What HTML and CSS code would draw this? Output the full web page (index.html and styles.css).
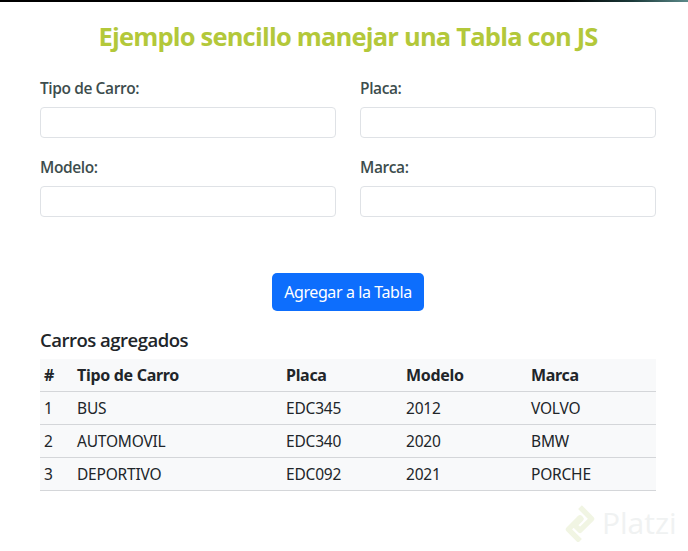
FILE: index.html
```html
<!DOCTYPE html>
<html lang="es">
<head>
<meta charset="utf-8">
<title>Tabla con JS</title>
<link rel="stylesheet" href="styles.css">
</head>
<body>
<div class="topline"></div>
<main class="container">
  <h1 class="title">Ejemplo sencillo manejar una Tabla con JS</h1>
  <form class="form">
    <div class="field">
      <label class="label">Tipo de Carro:</label>
      <input class="input" type="text">
    </div>
    <div class="field">
      <label class="label">Placa:</label>
      <input class="input" type="text">
    </div>
    <div class="field">
      <label class="label">Modelo:</label>
      <input class="input" type="text">
    </div>
    <div class="field">
      <label class="label">Marca:</label>
      <input class="input" type="text">
    </div>
  </form>
  <div class="actions">
    <button class="btn" type="button">Agregar a la Tabla</button>
  </div>
  <h2 class="subtitle">Carros agregados</h2>
  <table class="table">
    <thead>
      <tr><th class="c-num">#</th><th class="c-tipo">Tipo de Carro</th><th class="c-placa">Placa</th><th class="c-modelo">Modelo</th><th>Marca</th></tr>
    </thead>
    <tbody>
      <tr><td>1</td><td>BUS</td><td>EDC345</td><td>2012</td><td>VOLVO</td></tr>
      <tr><td>2</td><td>AUTOMOVIL</td><td>EDC340</td><td>2020</td><td>BMW</td></tr>
      <tr><td>3</td><td>DEPORTIVO</td><td>EDC092</td><td>2021</td><td>PORCHE</td></tr>
    </tbody>
  </table>
</main>
<div class="watermark">
  <svg class="wm-logo" width="32" height="38" viewBox="0 0 30 36"><path d="M15 3 L26 14 L15 25 L10 20 L16 14 L15 13 L4 24 L15 35" fill="none" stroke="#f1f5e3" stroke-width="5" stroke-linejoin="round"/></svg>
  <span class="wm-text">Platzi</span>
</div>
</body>
</html>
```
FILE: styles.css
```css
html, body {
  margin: 0;
  padding: 0;
  background: #ffffff;
}
body {
  font-family: "Noto Sans", "Open Sans", sans-serif;
  color: #212529;
  width: 688px;
  height: 551px;
  overflow: hidden;
  position: relative;
}
.topline {
  height: 2px;
  background: linear-gradient(90deg, #000 0%, #000 82%, #1b3a3a 92%, #5c8a8a 100%);
}
.container {
  width: 616px;
  margin-left: 40px;
}
.title {
  margin: 0;
  padding-top: 19px;
  text-align: center;
  font-family: "Open Sans", sans-serif;
  font-weight: 700;
  font-size: 25.5px;
  line-height: 30px;
  color: #b3c83a;
  letter-spacing: -0.8px;
}
.form {
  margin-top: 26px;
  display: grid;
  grid-template-columns: 1fr 1fr;
  column-gap: 24px;
  row-gap: 18px;
}
.field {
  display: flex;
  flex-direction: column;
}
.label {
  font-family: "Open Sans", sans-serif;
  font-size: 15.5px;
  font-weight: 600;
  line-height: 22px;
  color: #3d4d4d;
  margin-bottom: 8px;
  letter-spacing: -0.4px;
}
.input {
  box-sizing: border-box;
  height: 31px;
  border: 1px solid #dfe2e6;
  border-radius: 4px;
  margin: 0;
  padding: 0 10px;
  background: #fff;
}
.actions {
  display: flex;
  justify-content: center;
  margin-top: 56px;
}
.btn {
  width: 152px;
  height: 38px;
  background: #0d6efd;
  color: #fff;
  border: none;
  border-radius: 5px;
  font-family: "Noto Sans", sans-serif;
  font-size: 16px;
  letter-spacing: -0.4px;
  padding: 0;
}
.subtitle {
  margin: 17px 0 7px;
  font-family: "Open Sans", sans-serif;
  font-weight: 600;
  font-size: 18.5px;
  line-height: 24px;
  color: #212529;
  letter-spacing: -0.5px;
}
.table {
  width: 616px;
  border-collapse: collapse;
  background: #f8f9fa;
  font-size: 15.5px;
}
.table th, .table td {
  text-align: left;
  height: 32px;
  padding: 0 4px;
  border-bottom: 1px solid #d4d6d9;
  letter-spacing: -0.2px;
}
.table th {
  font-weight: 700;
  font-size: 16px;
  letter-spacing: -0.3px;
}
.c-num { width: 25px; }
.c-tipo { width: 201px; }
.c-placa { width: 112px; }
.c-modelo { width: 117px; }
.watermark {
  position: absolute;
  left: 564px;
  top: 504px;
  display: flex;
  align-items: center;
  gap: 6px;
}
.wm-text {
  font-family: "Open Sans", sans-serif;
  font-size: 30px;
  color: #f0f2f2;
  line-height: 38px;
}
```
